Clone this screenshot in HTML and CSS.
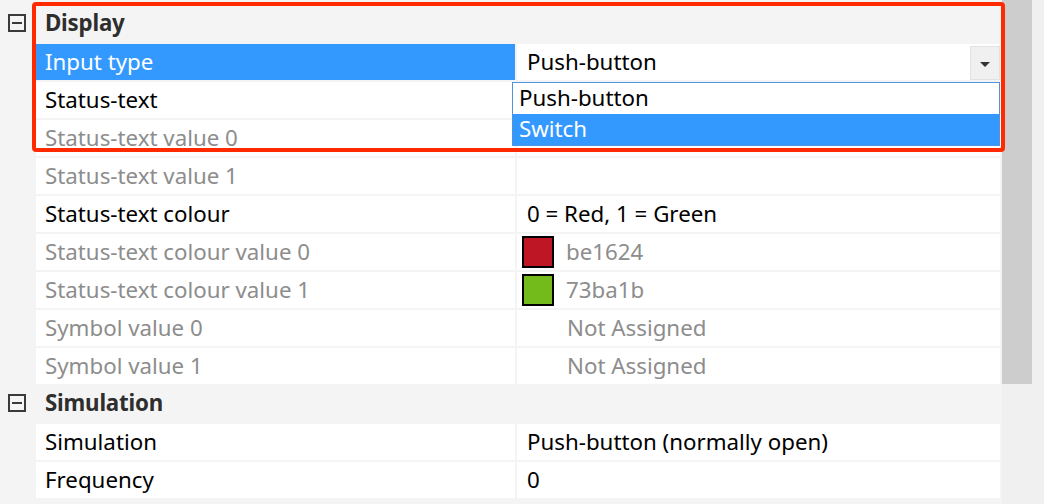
FILE: index.html
```html
<!DOCTYPE html>
<html lang="en">
<head>
<meta charset="utf-8">
<title>Properties</title>
<link rel="stylesheet" href="styles.css">
</head>
<body>
<div class="window">
  <div class="grid">
    <div class="category">
      <div class="cat-row">
        <span class="toggle"><span class="minus"></span></span>
        <span class="cat-name">Display</span>
      </div>
      <div class="prop selected">
        <div class="name">Input type</div>
        <div class="value combo">
          <span class="text">Push-button</span>
          <span class="drop-btn"><span class="arrow"></span></span>
        </div>
      </div>
      <div class="prop">
        <div class="name">Status-text</div>
        <div class="value"></div>
      </div>
      <div class="prop disabled">
        <div class="name">Status-text value 0</div>
        <div class="value"></div>
      </div>
      <div class="prop disabled">
        <div class="name">Status-text value 1</div>
        <div class="value"></div>
      </div>
      <div class="prop">
        <div class="name">Status-text colour</div>
        <div class="value"><span class="text">0 = Red, 1 = Green</span></div>
      </div>
      <div class="prop disabled">
        <div class="name">Status-text colour value 0</div>
        <div class="value"><span class="swatch red"></span><span class="text">be1624</span></div>
      </div>
      <div class="prop disabled">
        <div class="name">Status-text colour value 1</div>
        <div class="value"><span class="swatch green"></span><span class="text">73ba1b</span></div>
      </div>
      <div class="prop disabled">
        <div class="name">Symbol value 0</div>
        <div class="value"><span class="swatch blank"></span><span class="text">Not Assigned</span></div>
      </div>
      <div class="prop disabled">
        <div class="name">Symbol value 1</div>
        <div class="value"><span class="swatch blank"></span><span class="text">Not Assigned</span></div>
      </div>
    </div>
    <div class="category">
      <div class="cat-row">
        <span class="toggle"><span class="minus"></span></span>
        <span class="cat-name">Simulation</span>
      </div>
      <div class="prop">
        <div class="name">Simulation</div>
        <div class="value"><span class="text">Push-button (normally open)</span></div>
      </div>
      <div class="prop">
        <div class="name">Frequency</div>
        <div class="value"><span class="text">0</span></div>
      </div>
    </div>

    <ul class="dropdown">
      <li class="option">Push-button</li>
      <li class="option active">Switch</li>
    </ul>
    <div class="highlight"></div>
  </div>
  <div class="scrollbar">
    <div class="track">
      <div class="thumb"></div>
    </div>
    <div class="edge"></div>
  </div>
</div>
</body>
</html>
```

FILE: styles.css
```css
* { box-sizing: border-box; }

html, body {
  margin: 0;
  padding: 0;
  background: #f4f4f4;
}

body {
  font-family: "Noto Sans", "Open Sans", sans-serif;
  font-size: 22.3px;
  color: #000;
  width: 1044px;
  height: 504px;
  overflow: hidden;
}

.window {
  display: flex;
  height: 504px;
}

.grid {
  position: relative;
  width: 1002px;
  padding-top: 4px;
}

.cat-row {
  display: flex;
  align-items: center;
  height: 38px;
  padding-bottom: 1px;
}

.toggle {
  width: 18px;
  height: 18px;
  margin-left: 8px;
  margin-right: 19px;
  border: 2px solid #3a3a3a;
  display: flex;
  align-items: center;
  justify-content: center;
}

.minus {
  width: 10px;
  height: 2px;
  background: #3a3a3a;
}

.cat-name {
  font-weight: 700;
  color: #2e2e2e;
  letter-spacing: -0.2px;
}

.prop {
  display: grid;
  grid-template-columns: 479px 483px;
  column-gap: 2px;
  margin-left: 36px;
  margin-top: 2px;
  height: 36px;
  width: 964px;
}

.name, .value {
  background: #fff;
  display: flex;
  align-items: center;
  white-space: nowrap;
  padding-bottom: 2px;
}

.name {
  padding-left: 9px;
}

.value {
  padding-left: 10px;
}

.selected .name {
  background: #3399ff;
  color: #fff;
}

.disabled .name,
.disabled .value {
  color: #8d8d8d;
}

.combo {
  position: relative;
  padding-right: 0;
  padding-bottom: 0;
}

.combo .text {
  flex: 1;
  padding-bottom: 2px;
}

.drop-btn {
  align-self: flex-end;
  width: 30px;
  height: 34px;
  background: #f0f0f0;
  border: 1px solid #e2e2e2;
  display: flex;
  align-items: center;
  justify-content: center;
}

.arrow {
  width: 0;
  height: 0;
  border-left: 5px solid transparent;
  border-right: 5px solid transparent;
  border-top: 5px solid #333;
  margin-top: 2px;
}

.swatch {
  width: 32px;
  height: 32px;
  margin-left: -5px;
  margin-right: 12px;
  margin-top: 2px;
  border: 2px solid #000;
  flex: none;
}

.swatch.red { background: #be1624; }
.swatch.green { background: #73ba1b; }
.swatch.blank { border-color: transparent; margin-right: 13px; }

.dropdown {
  position: absolute;
  left: 512px;
  top: 82px;
  width: 488px;
  margin: 0;
  padding: 0;
  list-style: none;
  background: #fff;
  border: 1px solid #4f94df;
}

.option {
  height: 31px;
  line-height: 30px;
  padding-left: 6px;
  color: #000;
}

.option.active {
  background: #3399ff;
  color: #fff;
}

.highlight {
  position: absolute;
  left: 32px;
  top: 2px;
  width: 973px;
  height: 150px;
  border: 4px solid #ff2a00;
  border-radius: 4px;
  pointer-events: none;
}

.scrollbar {
  display: flex;
  width: 42px;
  height: 504px;
  background: #f0f0f0;
}

.track {
  width: 30px;
}

.thumb {
  height: 384px;
  background: #cdcdcd;
}

.edge {
  flex: 1;
}
```
